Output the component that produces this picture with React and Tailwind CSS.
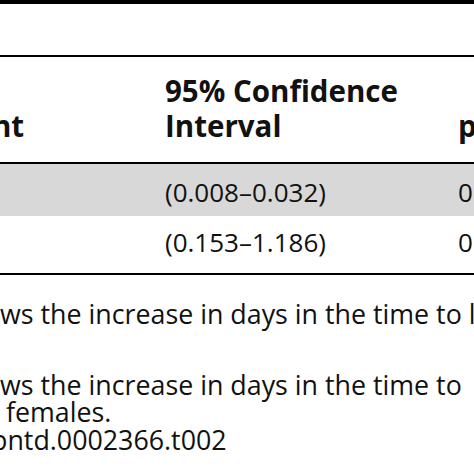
export default function App() {
  const rows = [
    { ci: "(0.008–0.032)", p: "0.001", shade: true, h: "h-[52px] pt-[12px]" },
    { ci: "(0.153–1.186)", p: "0.017", shade: false, h: "h-[57px] pt-[10px]" },
  ];

  return (
    <div className="w-[474px] h-[474px] overflow-hidden bg-white text-[#111] font-['Open_Sans',sans-serif]">
      {/* table rules + header */}
      <div className="h-[4px] bg-black" />
      <div className="h-[51px]" />
      <div className="h-[2px] bg-black" />

      <div className="h-[105px] pt-[16px] pb-[19px] flex items-end text-[29.5px] font-bold leading-[35px]">
        <div className="w-[165px] shrink-0 flex">
          <span className="whitespace-nowrap ml-[-136px]">Coefficient</span>
        </div>
        <div className="w-[293px] shrink-0">
          95% Confidence
          <br />
          Interval
        </div>
        <div className="whitespace-nowrap">p value</div>
      </div>
      <div className="h-[2px] bg-black" />

      {rows.map((r) => (
        <div
          key={r.ci}
          className={`${r.h} ${r.shade ? "bg-[#d8d8d8]" : ""} flex text-[26px] leading-[32px]`}
        >
          <div className="w-[165px] shrink-0" />
          <div className="w-[293px] shrink-0 whitespace-nowrap">{r.ci}</div>
          <div className="whitespace-nowrap">{r.p}</div>
        </div>
      ))}
      <div className="h-[2px] bg-black" />

      {/* footnotes */}
      <div className="mt-[25px] text-[26.8px] leading-[27.5px] whitespace-nowrap">
        <div>ws the increase in days in the time to larvae</div>
        <div className="h-[43px]" />
        <div>ws the increase in days in the time to</div>
        <div className="ml-[6px]">females.</div>
        <div className="ml-[-9px]">pntd.0002366.t002</div>
      </div>
    </div>
  );
}
